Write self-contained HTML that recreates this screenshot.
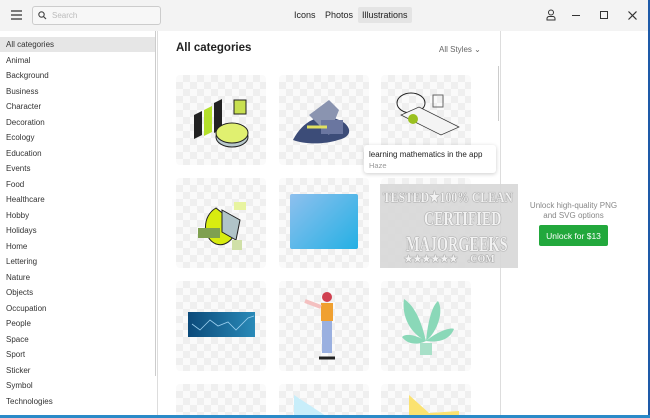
<!DOCTYPE html>
<html><head><style>
*{margin:0;padding:0;box-sizing:border-box}
html,body{width:650px;height:418px;overflow:hidden}
body{background:#fff;font-family:"Liberation Sans",sans-serif;position:relative;color:#222}
.hdr{position:absolute;left:0;top:0;width:650px;height:31px;background:#f3f3f3}
.search{position:absolute;left:32px;top:6px;width:129px;height:19px;border:1px solid #ccc;border-radius:3px;background:#f7f7f7;font-size:8px;color:#bbb;padding:4px 0 0 19px}
.nav{position:absolute;top:10px;font-size:9px;color:#222}
.side{position:absolute;left:0;top:31px;width:158px;height:387px;border-right:1px solid #ddd}
.side div{position:absolute;left:0;width:155px;height:15px;font-size:8px;color:#333;padding:3px 0 0 6px}
.tile{position:absolute;width:90px;height:90px;border-radius:4px;
background-color:#fafafa;background-image:linear-gradient(45deg,#efefef 25%,transparent 25%,transparent 75%,#efefef 75%),linear-gradient(45deg,#efefef 25%,transparent 25%,transparent 75%,#efefef 75%);background-size:14px 14px;background-position:0 0,7px 7px}
.wm{position:absolute;white-space:nowrap;font-family:"Liberation Serif",serif;font-weight:bold;color:#f2f2f2;text-shadow:0 0 1px #777,0 0 1px #777;transform-origin:0 0}
</style></head><body>
<div class="hdr">
 <svg style="position:absolute;left:11px;top:10px" width="11" height="10"><path d="M0 1h11M0 5h11M0 9h11" stroke="#333" stroke-width="1.2"/></svg>
 <div class="search">Search</div>
 <svg style="position:absolute;left:38px;top:11px" width="9" height="9"><circle cx="3.5" cy="3.5" r="2.7" fill="none" stroke="#444" stroke-width="1.1"/><path d="M5.5 5.5L8 8" stroke="#444" stroke-width="1.2"/></svg>
 <span class="nav" style="left:294px">Icons</span>
 <span class="nav" style="left:325px">Photos</span>
 <span style="position:absolute;left:358px;top:7px;width:54px;height:16px;background:#e4e4e4;border-radius:2px"></span>
 <span class="nav" style="left:362px">Illustrations</span>
 <svg style="position:absolute;left:546px;top:9px" width="10" height="12"><circle cx="5" cy="3.5" r="2.5" fill="none" stroke="#333" stroke-width="1"/><path d="M1 11v-1.5a2 2 0 0 1 2-2h4a2 2 0 0 1 2 2V11z" fill="none" stroke="#333" stroke-width="1"/></svg>
 <div style="position:absolute;left:572px;top:15px;width:8px;height:1px;background:#333"></div>
 <div style="position:absolute;left:600px;top:11px;width:8px;height:8px;border:1.2px solid #333"></div>
 <svg style="position:absolute;left:628px;top:11px" width="9" height="9"><path d="M0.5 0.5l8 8M8.5 0.5l-8 8" stroke="#333" stroke-width="1.2"/></svg>
</div>
<div class="side">
 <div style="top:6px;background:#e6e6e6">All categories</div>
 <div style="top:21.5px">Animal</div><div style="top:37px">Background</div><div style="top:52.5px">Business</div><div style="top:68px">Character</div><div style="top:83.5px">Decoration</div><div style="top:99px">Ecology</div><div style="top:114.5px">Education</div><div style="top:130px">Events</div><div style="top:145.5px">Food</div><div style="top:161px">Healthcare</div><div style="top:176.5px">Hobby</div><div style="top:192px">Holidays</div><div style="top:207.5px">Home</div><div style="top:223px">Lettering</div><div style="top:238.5px">Nature</div><div style="top:254px">Objects</div><div style="top:269.5px">Occupation</div><div style="top:285px">People</div><div style="top:300.5px">Space</div><div style="top:316px">Sport</div><div style="top:331.5px">Sticker</div><div style="top:347px">Symbol</div><div style="top:362.5px">Technologies</div>
 <span style="position:absolute;left:155px;top:0;width:1px;height:345px;background:#ccc"></span>
</div>
<div style="position:absolute;left:176px;top:42px;font-size:11.5px;font-weight:bold;color:#222">All categories</div>
<div style="position:absolute;left:439px;top:45px;font-size:8px;color:#666">All Styles ⌄</div>
<div style="position:absolute;left:500px;top:31px;width:1px;height:387px;background:#ddd"></div>
<div style="position:absolute;left:498px;top:66px;width:1px;height:55px;background:#ccc"></div>

<div class="tile" style="left:176px;top:75px"></div>
<div class="tile" style="left:279px;top:75px"></div>
<div class="tile" style="left:381px;top:75px"></div>
<div class="tile" style="left:176px;top:178px"></div>
<div class="tile" style="left:279px;top:178px"></div>
<div class="tile" style="left:381px;top:178px"></div>
<div class="tile" style="left:176px;top:281px"></div>
<div class="tile" style="left:279px;top:281px"></div>
<div class="tile" style="left:381px;top:281px"></div>
<div class="tile" style="left:176px;top:384px;height:34px"></div>
<div class="tile" style="left:279px;top:384px;height:34px"></div>
<div class="tile" style="left:381px;top:384px;height:34px"></div>

<svg style="position:absolute;left:176px;top:75px" width="90" height="90"><path d="M18 40l8-4v24l-8 4z" fill="#222"/><path d="M28 35l8-4v26l-8 4z" fill="#b4e02a"/><path d="M38 28l8-4v30l-8 4z" fill="#222"/><ellipse cx="56" cy="62" rx="16" ry="10" fill="#b8c8cc" stroke="#222"/><ellipse cx="56" cy="58" rx="16" ry="10" fill="#e0f070" stroke="#222"/><rect x="58" y="25" width="12" height="14" fill="#c8e050" stroke="#222"/></svg>
<svg style="position:absolute;left:279px;top:75px" width="90" height="90"><path d="M14 65c10-20 30-30 50-18 8 5 10 15-5 18-15 5-35 4-45 0z" fill="#3c4c78"/><path d="M30 40l20-15 10 10-10 25z" fill="#8a94b0"/><rect x="42" y="45" width="22" height="14" fill="#6a76a0"/><path d="M28 52h20" stroke="#e0e060" stroke-width="3"/></svg>
<svg style="position:absolute;left:381px;top:75px" width="90" height="90"><ellipse cx="30" cy="28" rx="14" ry="10" fill="none" stroke="#222"/><path d="M20 40l40 20 18-8-40-20z" fill="#f4f4f4" stroke="#333" stroke-width=".7"/><circle cx="32" cy="44" r="5" fill="#9ac020"/><rect x="52" y="20" width="10" height="12" fill="none" stroke="#666"/></svg>
<div style="position:absolute;left:364px;top:145px;width:132px;height:28px;background:#fff;border-radius:3px;box-shadow:0 1px 4px rgba(0,0,0,.2)"><div style="font-size:8px;color:#222;padding:5px 0 0 5px">learning mathematics in the app</div><div style="font-size:7.5px;color:#999;padding:2px 0 0 5px">Haze</div></div>
<svg style="position:absolute;left:176px;top:178px" width="90" height="90"><path d="M40 30c-14 8-14 30 0 36 12 4 22-10 20-20z" fill="#d8ec10" stroke="#222"/><path d="M46 32l18 10-4 20-14-8z" fill="#b0c4c8" stroke="#222"/><rect x="22" y="50" width="22" height="10" fill="#7fa050"/><rect x="58" y="24" width="12" height="8" fill="#e8f4a0"/><rect x="56" y="62" width="10" height="10" fill="#d0e0a8"/></svg>
<div style="position:absolute;left:290px;top:194px;width:68px;height:55px;border-radius:2px;background:linear-gradient(135deg,#8ec0ee,#24b0e4)"></div>
<div style="position:absolute;left:380px;top:184px;width:138px;height:84px;background:rgba(215,215,215,.9);overflow:hidden">
 <div class="wm" style="left:3px;top:4px;font-size:15px;transform:scaleX(.78)">TESTED★100% CLEAN</div>
 <div class="wm" style="left:44px;top:24px;font-size:20px;transform:scaleX(.7)">CERTIFIED</div>
 <div class="wm" style="left:26px;top:48px;font-size:21px;transform:scaleX(.68)">MAJORGEEKS</div>
 <div class="wm" style="left:24px;top:70px;font-size:10px">★★★★★★&nbsp;&nbsp;&nbsp;&nbsp;.COM</div>
</div>
<div style="position:absolute;left:188px;top:312px;width:67px;height:25px;background:linear-gradient(90deg,#0b4a7a,#2a8ab8)"></div>
<svg style="position:absolute;left:188px;top:312px" width="67" height="25"><path d="M4 12l8 6 10-10 8 6 10-4 8 8 12-12 6-2" fill="none" stroke="#9cd0f0" stroke-width=".8"/></svg>
<svg style="position:absolute;left:279px;top:281px" width="90" height="90"><circle cx="48" cy="16" r="5" fill="#d04050"/><rect x="42" y="22" width="12" height="18" fill="#f0a030"/><rect x="43" y="40" width="10" height="32" fill="#9ab0e0"/><path d="M42 26l-16-6" stroke="#f4c0c0" stroke-width="4"/><path d="M40 77h16" stroke="#222" stroke-width="3"/></svg>
<svg style="position:absolute;left:381px;top:281px" width="90" height="90"><path d="M45 60c-20-10-24-30-22-42 12 8 18 25 22 42zM45 60c2-20 6-35 12-40 6 10 0 30-12 40zM45 60c12-10 25-14 28-12-4 10-14 14-28 12zM45 60c-10-6-20-8-24-4 6 8 16 8 24 4z" fill="#8ad8b8"/><rect x="39" y="62" width="12" height="12" fill="#a8e0c8"/></svg>
<svg style="position:absolute;left:279px;top:384px" width="90" height="34"><path d="M15 11l35 23H15z" fill="#c8eefa"/></svg>
<svg style="position:absolute;left:381px;top:384px" width="90" height="34"><path d="M28 11l20 18 30-2v7H28z" fill="#fbe270"/></svg>

<div style="position:absolute;left:502px;top:201px;width:143px;text-align:center;font-size:8px;color:#888;line-height:10px">Unlock high-quality PNG<br>and SVG options</div>
<div style="position:absolute;left:539px;top:225px;width:69px;height:21px;background:#22a83c;border-radius:2px;color:#fff;font-size:8.5px;text-align:center;padding-top:5.5px">Unlock for $13</div>

<div style="position:absolute;left:648px;top:0;width:2px;height:418px;background:#1e5aa8"></div>
<div style="position:absolute;left:0;top:415px;width:650px;height:3px;background:#2a8ac8"></div>
</body></html>
